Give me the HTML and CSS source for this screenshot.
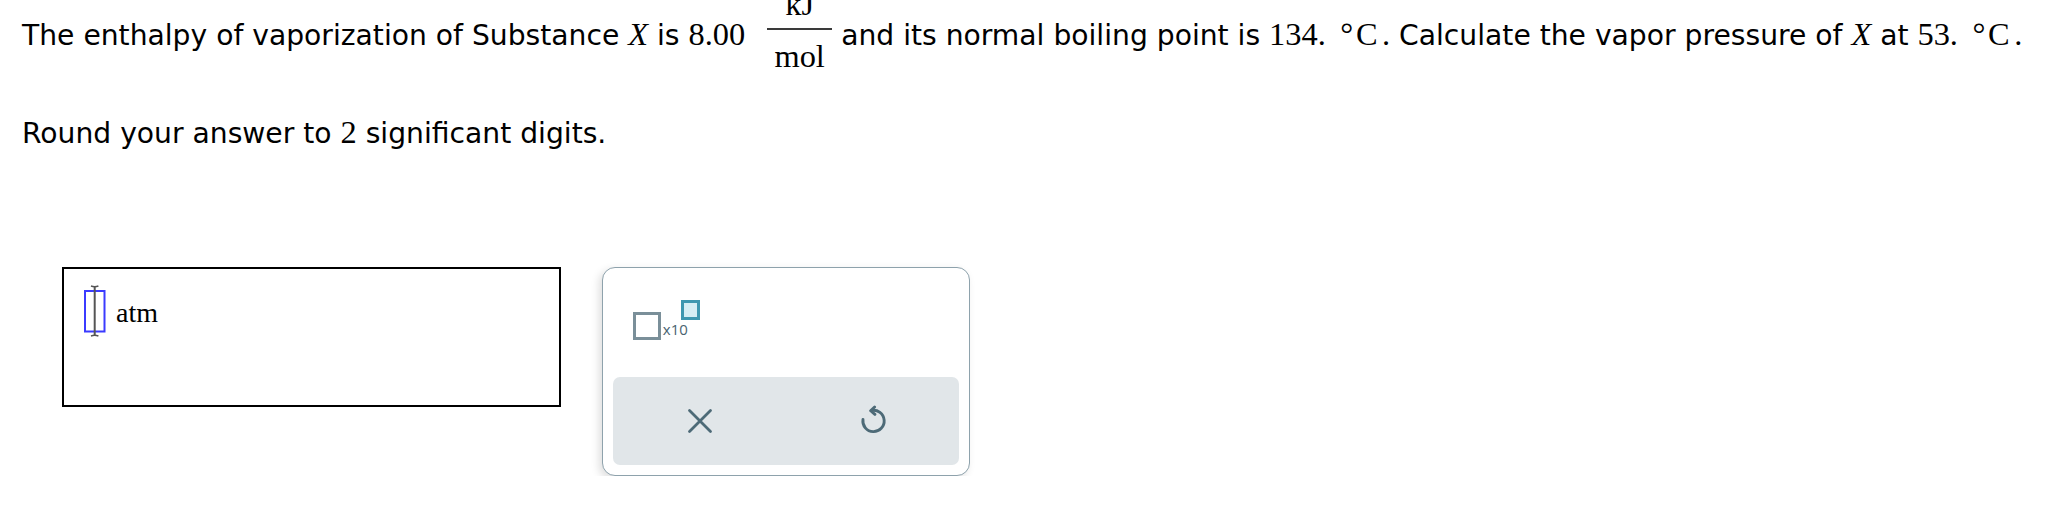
FILE: index.html
```html
<!DOCTYPE html>
<html lang="en">
<head>
<meta charset="utf-8">
<title>Vapor pressure</title>
<link rel="stylesheet" href="styles.css">
</head>
<body>
<div class="page">
  <p class="q first">The enthalpy of vaporization of Substance <span class="m i">X</span> is <span class="m">8.00</span><span class="frac"><span class="num m">kJ</span><span class="bar"></span><span class="den m">mol</span></span> and its normal boiling point is <span class="m">134.<span class="gap"></span><span class="deg">°</span>C<span class="dot">.</span></span> Calculate the vapor pressure of <span class="m i">X</span> at <span class="m">53.<span class="gap"></span><span class="deg">°</span>C<span class="dot">.</span></span></p>
  <p class="q second">Round your answer to <span class="m">2</span> significant digits.</p>
  <div class="answer-row">
    <div class="answer-box">
      <svg class="cursor" width="24" height="52" viewBox="0 0 24 52">
        <rect x="2" y="6" width="19.5" height="40.5" fill="none" stroke="#3b3bff" stroke-width="2"/>
        <line x1="11.7" y1="1.5" x2="11.7" y2="50.5" stroke="#555" stroke-width="2"/>
        <path d="M8 1 Q11.7 2.5 15.4 1 M8 51 Q11.7 49.5 15.4 51" fill="none" stroke="#555" stroke-width="1.4"/>
      </svg>
      <span class="unit">atm</span>
    </div>
    <div class="panel">
      <div class="tmpl">
        <span class="base-box"></span>
        <span class="x10">x10</span>
        <span class="sup-box"></span>
      </div>
      <div class="actions">
        <button class="act" type="button" aria-label="Clear">
          <svg width="26" height="26" viewBox="0 0 26 26"><path d="M2.5 2.5 L23.5 23.5 M23.5 2.5 L2.5 23.5" fill="none" stroke="#4d6a77" stroke-width="2.8" stroke-linecap="round"/></svg>
        </button>
        <button class="act" type="button" aria-label="Undo">
          <svg width="32" height="32" viewBox="0 0 30 30"><path d="M13.5 5.2 A10 10 0 1 1 5.6 13.5" fill="none" stroke="#4d6a77" stroke-width="2.7" stroke-linecap="round"/><path d="M16.5 1.8 L12.8 5.4 L16.8 8.8" fill="none" stroke="#4d6a77" stroke-width="2.7" stroke-linecap="round" stroke-linejoin="round"/></svg>
        </button>
      </div>
    </div>
  </div>
</div>
</body>
</html>
```
FILE: styles.css
```css
html, body {
  margin: 0;
  padding: 0;
  background: #ffffff;
}

.page {
  padding-left: 22px;
  font-family: "DejaVu Sans", Verdana, sans-serif;
  font-size: 28.2px;
  color: #000;
}

.q {
  margin: 0;
  line-height: 40px;
  white-space: nowrap;
}

.q.first {
  margin-top: -12px;
}

.q.second {
  margin-top: 42px;
}

.m {
  font-family: "Liberation Serif", "Times New Roman", serif;
  font-size: 32.4px;
  line-height: 1;
}

.m .gap {
  display: inline-block;
  width: 0.45em;
}

.m .deg {
  margin-right: 0.08em;
}

.m .dot {
  margin-left: 0.14em;
}

.i {
  font-style: italic;
}

.frac {
  display: inline-flex;
  flex-direction: column;
  align-items: center;
  vertical-align: 29.5px;
  margin-left: 22px;
}

.frac .num,
.frac .den {
  line-height: 32px;
}

.frac .num {
  padding-bottom: 8px;
}

.frac .bar {
  width: 65px;
  height: 2px;
  background: #3a3a3a;
}

.frac .den {
  padding-top: 10px;
}

.answer-row {
  display: flex;
  align-items: flex-start;
  gap: 41px;
  margin-top: 113px;
  margin-left: 40px;
}

.answer-box {
  box-sizing: border-box;
  width: 499px;
  height: 140px;
  border: 2px solid #000;
  padding: 16px 0 0 19px;
  display: flex;
  align-items: flex-start;
}

.cursor {
  display: block;
  flex: none;
}

.unit {
  font-family: "Liberation Serif", "Times New Roman", serif;
  font-size: 28px;
  line-height: 28px;
  margin-top: 14px;
  margin-left: 9px;
}

.panel {
  box-sizing: border-box;
  width: 368px;
  height: 209px;
  border: 1.5px solid #8ea2ac;
  border-radius: 13px;
  background: #fff;
  box-shadow: -3px 3px 9px rgba(0, 0, 0, 0.13);
  padding: 32px 10px 9px 10px;
  display: flex;
  flex-direction: column;
}

.tmpl {
  display: flex;
  align-items: flex-start;
  height: 40px;
  padding-left: 20px;
}

.base-box {
  box-sizing: border-box;
  width: 27.5px;
  height: 27.5px;
  margin-top: 12.3px;
  border: 3px solid #7a8f99;
}

.x10 {
  font-family: "Open Sans", "DejaVu Sans", sans-serif;
  font-size: 15px;
  line-height: 15px;
  color: #4a6370;
  margin-top: 22.4px;
  margin-left: 2.3px;
}

.sup-box {
  box-sizing: border-box;
  width: 19.5px;
  height: 19.5px;
  margin-left: -7px;
  border: 3px solid #3d97b0;
  background: #d4edf4;
}

.actions {
  margin-top: 37px;
  height: 88px;
  border-radius: 7px;
  background: #e1e6e9;
  display: flex;
}

.act {
  flex: 1;
  border: 0;
  background: transparent;
  padding: 0;
  display: flex;
  align-items: center;
  justify-content: center;
}

.act svg {
  display: block;
}
```
